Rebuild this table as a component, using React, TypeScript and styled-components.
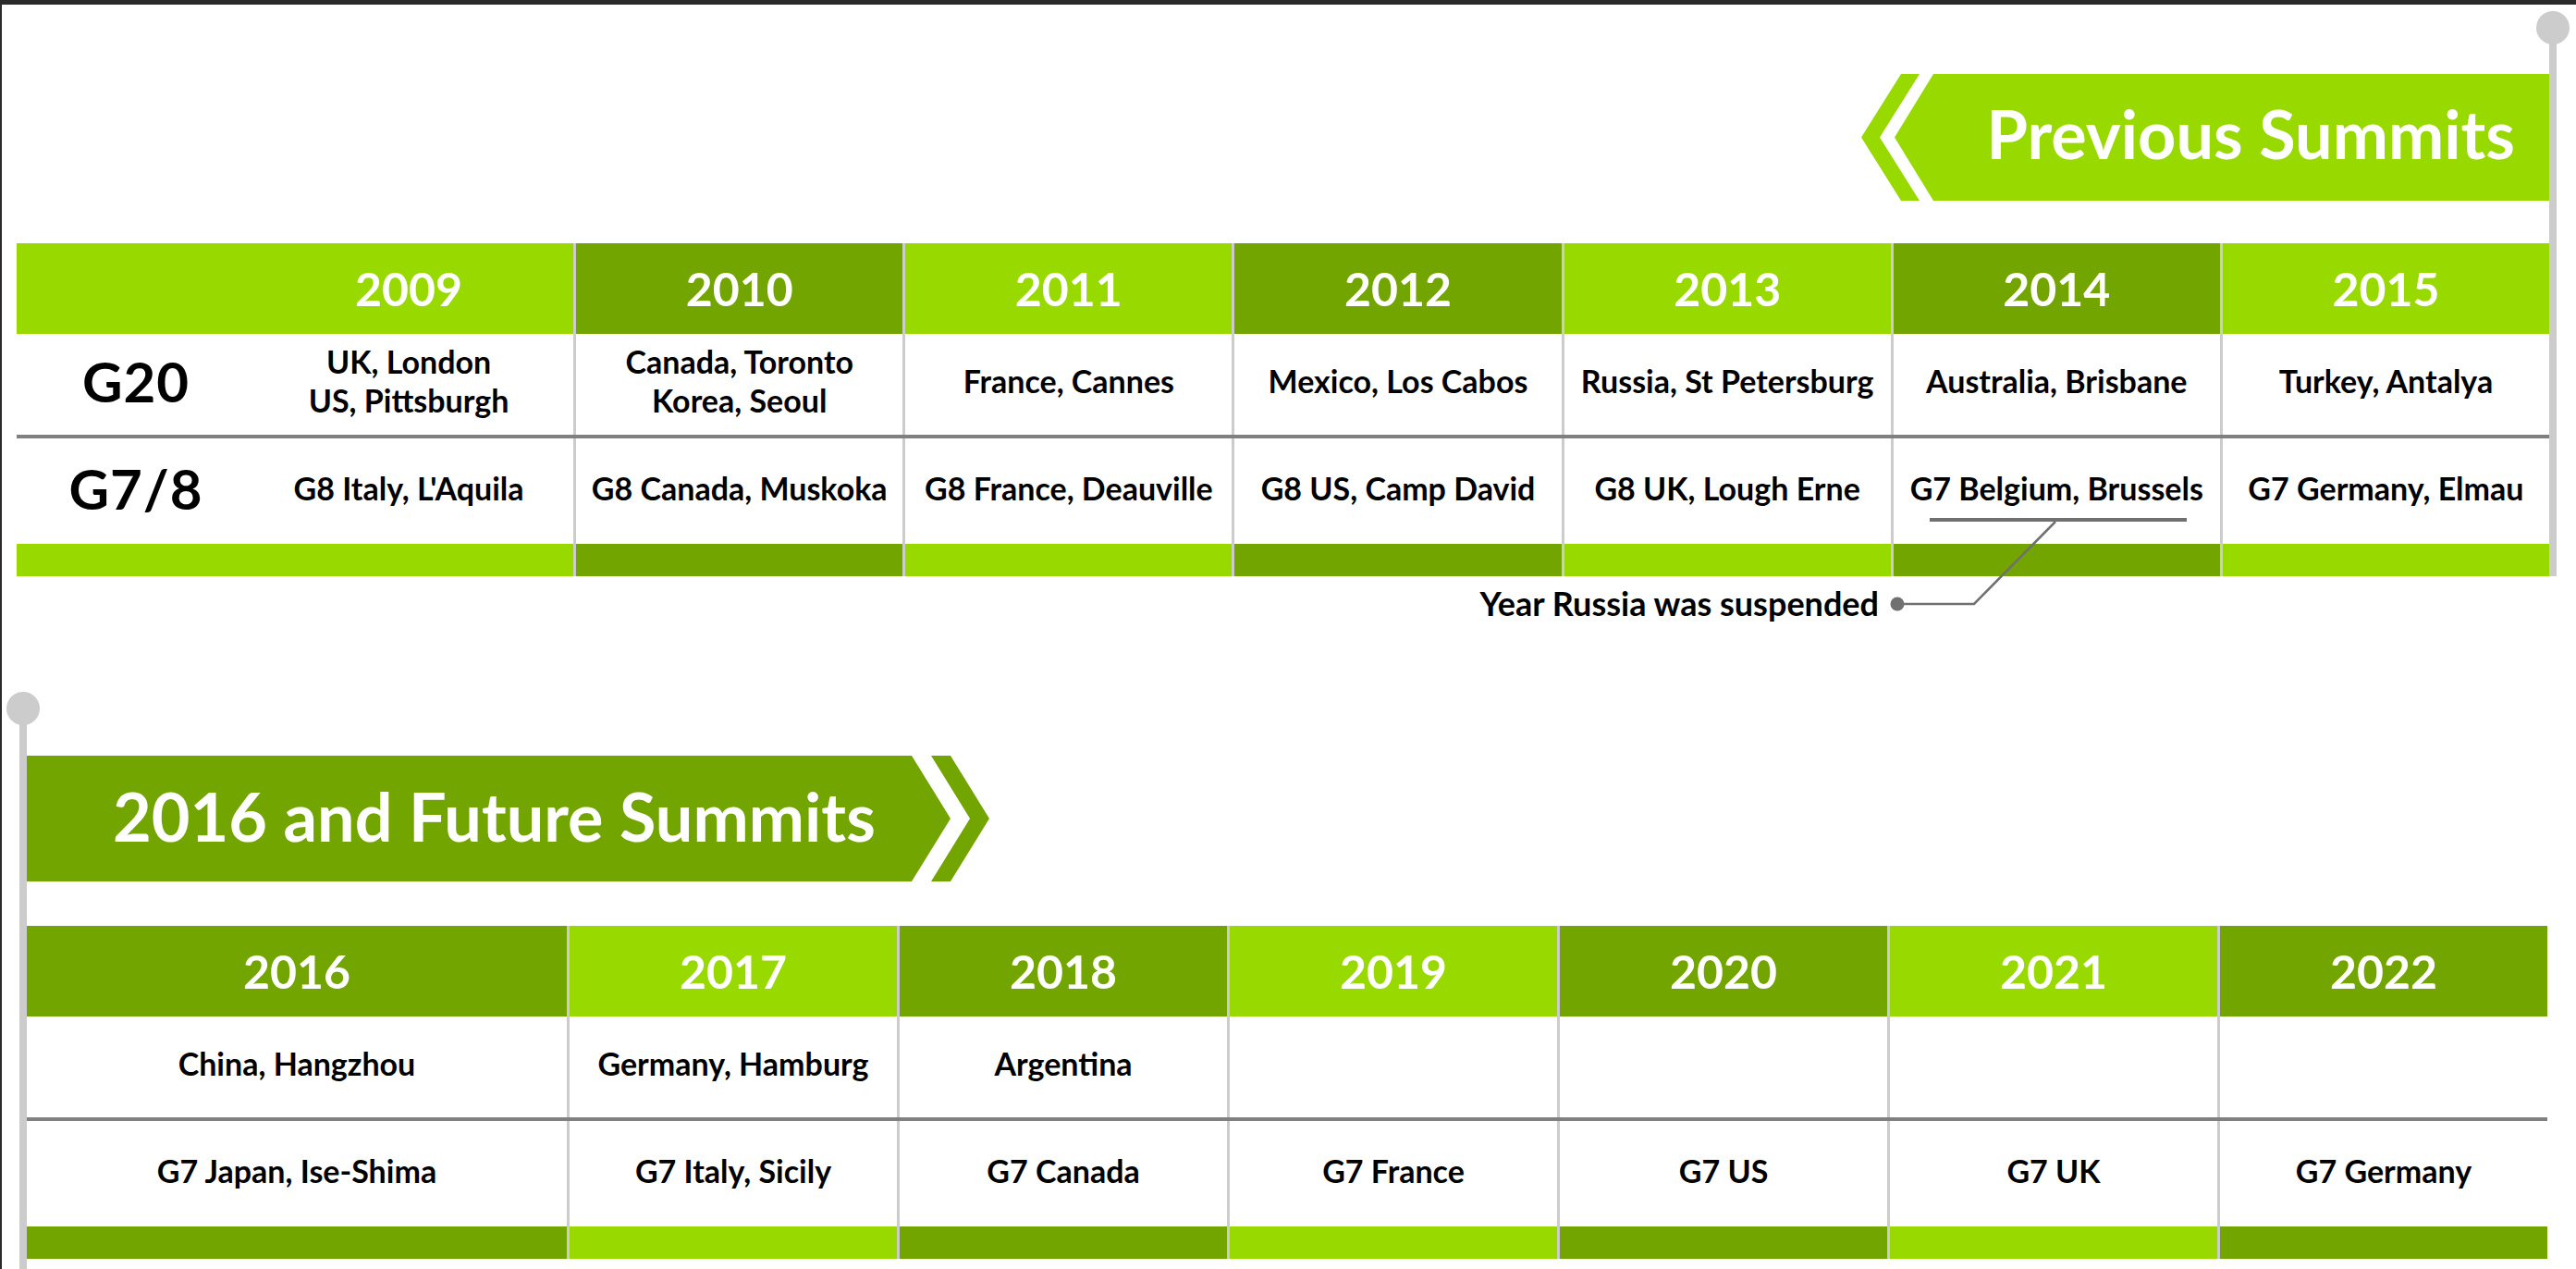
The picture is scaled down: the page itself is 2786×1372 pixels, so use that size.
import React from 'react';
import styled, { createGlobalStyle, css } from 'styled-components';

const LIGHT = '#98d900';
const DARK = '#73a500';
const RULE = '#cccccc';
const FONT = `Lato, "Liberation Sans", "DejaVu Sans", sans-serif`;

type Tone = 'light' | 'dark';

const GlobalStyle = createGlobalStyle`
  html, body { margin: 0; padding: 0; background: #ffffff; }
  body { font-family: ${FONT}; }
  *, *::before, *::after { box-sizing: border-box; }
`;

const Page = styled.div`
  width: 2786px;
  height: 1372px;
  overflow: hidden;
  background: #ffffff;
  border-top: 5px solid #2a2a2a;
  border-left: 2px solid #2a2a2a;
  display: flex;
  flex-direction: column;
  font-family: ${FONT};
  font-weight: 700;
  color: #000000;
`;

const TopSection = styled.section`
  display: flex;
  flex-direction: column;
`;

const TopRow = styled.div`
  display: flex;
  align-items: stretch;
`;

const TopContent = styled.div`
  flex: 1;
  display: flex;
  flex-direction: column;
  padding: 75px 0 0 16px;
`;

const BottomRow = styled.section`
  flex: 1;
  display: flex;
  align-items: stretch;
`;

const BottomContent = styled.div`
  flex: 1;
  display: flex;
  flex-direction: column;
  padding: 145px 31px 0 0;
`;

const Pole = styled.div<{ $top: number; $left?: number; $right?: number }>`
  position: relative;
  flex: 0 0 8px;
  width: 8px;
  background: ${RULE};
  margin-top: ${(p) => p.$top}px;
  margin-left: ${(p) => p.$left ?? 0}px;
  margin-right: ${(p) => p.$right ?? 0}px;
  &::before {
    content: '';
    position: absolute;
    top: -18px;
    left: -14px;
    width: 36px;
    height: 36px;
    border-radius: 50%;
    background: ${RULE};
  }
`;

const BannerRow = styled.div<{ $align: 'start' | 'end'; $height: number }>`
  display: flex;
  justify-content: ${(p) => (p.$align === 'end' ? 'flex-end' : 'flex-start')};
  height: ${(p) => p.$height}px;
`;

const Chevron = styled.div<{ $dir: 'left' | 'right'; $color: string; $overlap: number }>`
  flex: 0 0 63px;
  height: 100%;
  background: ${(p) => p.$color};
  ${(p) =>
    p.$dir === 'left'
      ? css`
          clip-path: polygon(43px 0, 63px 0, 20px 50%, 63px 100%, 43px 100%, 0 50%);
          margin-right: -${p.$overlap}px;
        `
      : css`
          clip-path: polygon(0 0, 21px 0, 63px 50%, 21px 100%, 0 100%, 42px 50%);
          margin-left: -${p.$overlap}px;
        `}
`;

const Arrow = styled.div<{ $dir: 'left' | 'right'; $color: string; $width: number; $lift: number }>`
  flex: 0 0 ${(p) => p.$width}px;
  height: 100%;
  display: flex;
  align-items: center;
  background: ${(p) => p.$color};
  color: #ffffff;
  font-size: 72px;
  line-height: 1;
  white-space: nowrap;
  padding-bottom: ${(p) => p.$lift}px;
  ${(p) =>
    p.$dir === 'left'
      ? css`
          justify-content: flex-end;
          padding-right: 37px;
          clip-path: polygon(42px 0, 100% 0, 100% 100%, 42px 100%, 0 50%);
        `
      : css`
          justify-content: flex-start;
          padding-left: 93px;
          clip-path: polygon(0 0, calc(100% - 42px) 0, 100% 50%, calc(100% - 42px) 100%, 0 100%);
        `}
`;

const Grid = styled.div<{ $cols: string; $top: number }>`
  display: grid;
  grid-template-columns: ${(p) => p.$cols};
  grid-template-rows: 98px 109px 4px 114px 35px;
  margin-top: ${(p) => p.$top}px;
`;

const Cell = styled.div<{ $divider: boolean }>`
  display: flex;
  align-items: center;
  justify-content: center;
  text-align: center;
  border-left: ${(p) => (p.$divider ? `3px solid ${RULE}` : 'none')};
  min-width: 0;
`;

const HeaderCell = styled(Cell)<{ $tone: Tone }>`
  background: ${(p) => (p.$tone === 'light' ? LIGHT : DARK)};
  color: #ffffff;
  font-size: 50px;
  line-height: 1;
`;

const BodyCell = styled(Cell)<{ $lift: number }>`
  flex-direction: column;
  font-size: 34px;
  line-height: 42px;
  white-space: nowrap;
  color: #000000;
  padding-bottom: ${(p) => p.$lift}px;
`;

const LabelCell = styled(Cell)<{ $lift: number }>`
  font-size: 60px;
  line-height: 1;
  letter-spacing: 1px;
  color: #000000;
  padding-left: 12px;
  padding-bottom: ${(p) => p.$lift}px;
`;

const BarCell = styled(Cell)<{ $tone: Tone }>`
  background: ${(p) => (p.$tone === 'light' ? LIGHT : DARK)};
`;

const RowRule = styled.div`
  grid-column: 1 / -1;
  background: #808080;
`;

const AnnotationRow = styled.div`
  position: relative;
  height: 40px;
  margin-top: 9px;
  display: flex;
  justify-content: flex-end;
  align-items: center;
  padding-right: 754px;
  font-size: 36px;
  line-height: 40px;
`;

const Leader = styled.svg`
  position: absolute;
  left: 2038px;
  top: -77px;
  overflow: visible;
`;

type Column = {
  year?: string;
  tone: Tone;
  divider: boolean;
  label?: boolean;
  g20: string[];
  g7: string[];
};

const previous: Column[] = [
  { tone: 'light', divider: false, label: true, g20: ['G20'], g7: ['G7/8'] },
  { year: '2009', tone: 'light', divider: false, g20: ['UK, London', 'US, Pittsburgh'], g7: ["G8 Italy, L'Aquila"] },
  { year: '2010', tone: 'dark', divider: true, g20: ['Canada, Toronto', 'Korea, Seoul'], g7: ['G8 Canada, Muskoka'] },
  { year: '2011', tone: 'light', divider: true, g20: ['France, Cannes'], g7: ['G8 France, Deauville'] },
  { year: '2012', tone: 'dark', divider: true, g20: ['Mexico, Los Cabos'], g7: ['G8 US, Camp David'] },
  { year: '2013', tone: 'light', divider: true, g20: ['Russia, St Petersburg'], g7: ['G8 UK, Lough Erne'] },
  { year: '2014', tone: 'dark', divider: true, g20: ['Australia, Brisbane'], g7: ['G7 Belgium, Brussels'] },
  { year: '2015', tone: 'light', divider: true, g20: ['Turkey, Antalya'], g7: ['G7 Germany, Elmau'] },
];

const future: Column[] = [
  { year: '2016', tone: 'dark', divider: false, g20: ['China, Hangzhou'], g7: ['G7 Japan, Ise-Shima'] },
  { year: '2017', tone: 'light', divider: true, g20: ['Germany, Hamburg'], g7: ['G7 Italy, Sicily'] },
  { year: '2018', tone: 'dark', divider: true, g20: ['Argentina'], g7: ['G7 Canada'] },
  { year: '2019', tone: 'light', divider: true, g20: [], g7: ['G7 France'] },
  { year: '2020', tone: 'dark', divider: true, g20: [], g7: ['G7 US'] },
  { year: '2021', tone: 'light', divider: true, g20: [], g7: ['G7 UK'] },
  { year: '2022', tone: 'dark', divider: true, g20: [], g7: ['G7 Germany'] },
];

function Lines({ lines }: { lines: string[] }) {
  return (
    <>
      {lines.map((l) => (
        <span key={l}>{l}</span>
      ))}
    </>
  );
}

function SummitTable({ columns, template, top }: { columns: Column[]; template: string; top: number }) {
  const body = (key: 'g20' | 'g7', lift: number) =>
    columns.map((c, i) =>
      c.label ? (
        <LabelCell key={`${key}-${i}`} $divider={c.divider} $lift={lift}>
          {c[key][0]}
        </LabelCell>
      ) : (
        <BodyCell key={`${key}-${i}`} $divider={c.divider} $lift={lift}>
          <Lines lines={c[key]} />
        </BodyCell>
      )
    );
  return (
    <Grid $cols={template} $top={top}>
      {columns.map((c, i) => (
        <HeaderCell key={`h-${i}`} $tone={c.tone} $divider={c.divider}>
          {c.year ?? ''}
        </HeaderCell>
      ))}
      {body('g20', 8)}
      <RowRule />
      {body('g7', 6)}
      {columns.map((c, i) => (
        <BarCell key={`b-${i}`} $tone={c.tone} $divider={c.divider} />
      ))}
    </Grid>
  );
}

export default function App() {
  return (
    <>
      <GlobalStyle />
      <Page>
        <TopSection>
          <TopRow>
            <TopContent>
              <BannerRow $align="end" $height={137}>
                <Chevron $dir="left" $color={LIGHT} $overlap={27} />
                <Arrow $dir="left" $color={LIGHT} $width={708} $lift={10}>
                  Previous Summits
                </Arrow>
              </BannerRow>
              <SummitTable columns={previous} template="246px repeat(7, 1fr)" top={46} />
            </TopContent>
            <Pole $top={25} $right={21} />
          </TopRow>
          <AnnotationRow>
            Year Russia was suspended
            <Leader width={330} height={112} viewBox="0 0 330 112">
              <line x1={47} y1={7} x2={325} y2={7} stroke="#707070" strokeWidth={4} />
              <polyline points="183,9 95,98 18,98" fill="none" stroke="#707070" strokeWidth={2.5} />
              <circle cx={12} cy={98} r={7.5} fill="#707070" />
            </Leader>
          </AnnotationRow>
        </TopSection>
        <BottomRow>
          <Pole $top={94} $left={19} />
          <BottomContent>
            <BannerRow $align="start" $height={136}>
              <Arrow $dir="right" $color={DARK} $width={999} $lift={6}>
                2016 and Future Summits
              </Arrow>
              <Chevron $dir="right" $color={DARK} $overlap={21} />
            </BannerRow>
            <SummitTable columns={future} template="584px repeat(6, 1fr)" top={48} />
          </BottomContent>
        </BottomRow>
      </Page>
    </>
  );
}
